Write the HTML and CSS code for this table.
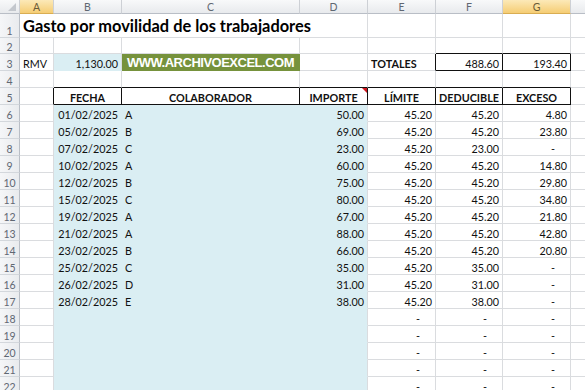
FILE: index.html
```html
<!DOCTYPE html>
<html lang="es">
<head>
<meta charset="utf-8">
<title>Gasto por movilidad</title>
<link rel="stylesheet" href="styles.css">
</head>
<body>
<div class="sheet">
  <div class="r hd"><div class="cn"></div><div class="sel">A</div><div>B</div><div>C</div><div>D</div><div>E</div><div>F</div><div class="sel">G</div><div></div></div>
  <div class="r t1"><div class="rh">1</div><div class="title">Gasto por movilidad de los trabajadores</div><div></div><div></div><div></div><div></div></div>
  <div class="r r2"><div class="rh">2</div><div></div><div></div><div></div><div></div><div></div><div class="bbk"></div><div class="bbk"></div><div></div></div>
  <div class="r"><div class="rh">3</div><div>RMV</div><div class="bl n ed">1,130.00</div><div class="green">WWW.ARCHIVOEXCEL.COM</div><div></div><div class="b brk">TOTALES</div><div class="n bx">488.60</div><div class="n bx">193.40</div><div></div></div>
  <div class="r"><div class="rh">4</div><div></div><div class="bbk"></div><div class="bbk"></div><div class="bbk"></div><div class="bbk"></div><div class="bbk"></div><div class="bbk"></div><div></div></div>
  <div class="r"><div class="rh">5</div><div class="brk"></div><div class="th">FECHA</div><div class="th">COLABORADOR</div><div class="th cm">IMPORTE</div><div class="th">LÍMITE</div><div class="th">DEDUCIBLE</div><div class="th">EXCESO</div><div></div></div>
  <div class="r"><div class="rh">6</div><div></div><div class="bl n">01/02/2025</div><div class="bl">A</div><div class="bl n ed">50.00</div><div class="n">45.20</div><div class="n">45.20</div><div class="n">4.80</div><div></div></div>
  <div class="r"><div class="rh">7</div><div></div><div class="bl n">05/02/2025</div><div class="bl">B</div><div class="bl n ed">69.00</div><div class="n">45.20</div><div class="n">45.20</div><div class="n">23.80</div><div></div></div>
  <div class="r"><div class="rh">8</div><div></div><div class="bl n">07/02/2025</div><div class="bl">C</div><div class="bl n ed">23.00</div><div class="n">45.20</div><div class="n">23.00</div><div class="d">-</div><div></div></div>
  <div class="r"><div class="rh">9</div><div></div><div class="bl n">10/02/2025</div><div class="bl">A</div><div class="bl n ed">60.00</div><div class="n">45.20</div><div class="n">45.20</div><div class="n">14.80</div><div></div></div>
  <div class="r"><div class="rh">10</div><div></div><div class="bl n">12/02/2025</div><div class="bl">B</div><div class="bl n ed">75.00</div><div class="n">45.20</div><div class="n">45.20</div><div class="n">29.80</div><div></div></div>
  <div class="r"><div class="rh">11</div><div></div><div class="bl n">15/02/2025</div><div class="bl">C</div><div class="bl n ed">80.00</div><div class="n">45.20</div><div class="n">45.20</div><div class="n">34.80</div><div></div></div>
  <div class="r"><div class="rh">12</div><div></div><div class="bl n">19/02/2025</div><div class="bl">A</div><div class="bl n ed">67.00</div><div class="n">45.20</div><div class="n">45.20</div><div class="n">21.80</div><div></div></div>
  <div class="r"><div class="rh">13</div><div></div><div class="bl n">21/02/2025</div><div class="bl">A</div><div class="bl n ed">88.00</div><div class="n">45.20</div><div class="n">45.20</div><div class="n">42.80</div><div></div></div>
  <div class="r"><div class="rh">14</div><div></div><div class="bl n">23/02/2025</div><div class="bl">B</div><div class="bl n ed">66.00</div><div class="n">45.20</div><div class="n">45.20</div><div class="n">20.80</div><div></div></div>
  <div class="r"><div class="rh">15</div><div></div><div class="bl n">25/02/2025</div><div class="bl">C</div><div class="bl n ed">35.00</div><div class="n">45.20</div><div class="n">35.00</div><div class="d">-</div><div></div></div>
  <div class="r"><div class="rh">16</div><div></div><div class="bl n">26/02/2025</div><div class="bl">D</div><div class="bl n ed">31.00</div><div class="n">45.20</div><div class="n">31.00</div><div class="d">-</div><div></div></div>
  <div class="r"><div class="rh">17</div><div></div><div class="bl n">28/02/2025</div><div class="bl">E</div><div class="bl n ed">38.00</div><div class="n">45.20</div><div class="n">38.00</div><div class="d">-</div><div></div></div>
  <div class="r"><div class="rh">18</div><div></div><div class="bl"></div><div class="bl"></div><div class="bl ed"></div><div class="d">-</div><div class="d">-</div><div class="d">-</div><div></div></div>
  <div class="r"><div class="rh">19</div><div></div><div class="bl"></div><div class="bl"></div><div class="bl ed"></div><div class="d">-</div><div class="d">-</div><div class="d">-</div><div></div></div>
  <div class="r"><div class="rh">20</div><div></div><div class="bl"></div><div class="bl"></div><div class="bl ed"></div><div class="d">-</div><div class="d">-</div><div class="d">-</div><div></div></div>
  <div class="r"><div class="rh">21</div><div></div><div class="bl"></div><div class="bl"></div><div class="bl ed"></div><div class="d">-</div><div class="d">-</div><div class="d">-</div><div></div></div>
  <div class="r"><div class="rh">22</div><div></div><div class="bl"></div><div class="bl"></div><div class="bl ed"></div><div class="d">-</div><div class="d">-</div><div class="d">-</div><div></div></div>
</div>
</body>
</html>
```
FILE: styles.css
```css
* { box-sizing: border-box; }
body {
  margin: 0;
  background: #fff;
  font-family: Lato, "Open Sans", sans-serif;
  font-size: 10.8px;
  color: #111;
}
.sheet { width: 585px; height: 390px; overflow: hidden; }
.r {
  display: grid;
  grid-template-columns: 20px 34px 68px 178px 68px 68px 67px 68px 14px;
  height: 17px;
}
.r > div {
  border-right: 1px solid #dadcdf;
  border-bottom: 1px solid #dadcdf;
  display: flex;
  align-items: flex-end;
  padding: 0 3px;
  white-space: nowrap;
  overflow: hidden;
  min-width: 0;
}
.r > div:last-child { border-right: none; }

.hd { height: 14px; }
.hd > div {
  background: linear-gradient(#f8f9fa, #e8eaed);
  border-right-color: #cdd0d5;
  border-bottom-color: #b9bec6;
  justify-content: center;
  align-items: center;
  color: #5f6772;
  font-size: 10.5px;
}
.hd > .sel {
  background: linear-gradient(#fce9b8, #f5cd74);
  border-bottom-color: #d9ad52;
  color: #6a5a38;
}
.hd > .cn { position: relative; }
.cn::after {
  content: "";
  position: absolute;
  right: 3px;
  bottom: 2px;
  border-left: 8px solid transparent;
  border-bottom: 8px solid #c3c7cd;
}
.r > .rh {
  background: linear-gradient(90deg, #f5f6f8, #e9ebee);
  border-right-color: #b9bec6;
  border-bottom-color: #d3d7dc;
  justify-content: center;
  color: #5f6772;
  padding: 0;
  font-size: 10.5px;
}
.t1 { height: 24px; }
.r2 { height: 16px; }
.r > .title {
  grid-column: span 4;
  font-weight: 700;
  font-size: 16.4px;
  padding: 0 3px 2px;
  color: #000;
}
.n { justify-content: flex-end; }
.r > .d { justify-content: flex-end; padding-right: 15px; }
.b { font-weight: 700; }
.r > .bl { background: #daeef3; border-color: #daeef3; }
.r > .bl.ed { border-right-color: #dadcdf; }
.r > .green {
  background: #76923c;
  border-color: #76923c;
  color: #fff;
  font-family: "Liberation Sans", Arial, sans-serif;
  font-weight: 700;
  font-size: 13px;
  letter-spacing: -0.5px;
  justify-content: center;
}
.r > .bbk { border-bottom-color: #111; }
.r > .brk { border-right-color: #111; }
.r > .bx { border-right-color: #111; border-bottom-color: #111; }
.r > .th {
  border-right-color: #111;
  border-bottom-color: #111;
  font-weight: 700;
  justify-content: center;
}
.r > .cm { position: relative; overflow: visible; }
.cm::after {
  content: "";
  position: absolute;
  top: 0;
  right: 0;
  border-left: 5px solid transparent;
  border-top: 5px solid #d0161e;
}
```
